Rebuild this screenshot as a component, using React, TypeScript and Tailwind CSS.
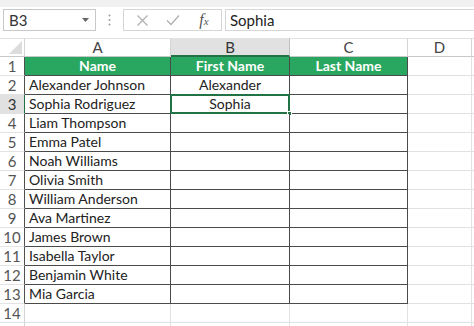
import React from "react";

const names = [
  "Alexander Johnson",
  "Sophia Rodriguez",
  "Liam Thompson",
  "Emma Patel",
  "Noah Williams",
  "Olivia Smith",
  "William Anderson",
  "Ava Martinez",
  "James Brown",
  "Isabella Taylor",
  "Benjamin White",
  "Mia Garcia",
];

const firstNames: Record<number, string> = { 2: "Alexander", 3: "Sophia" };

function RowHeader({ r }: { r: number }) {
  const inTable = r <= 13;
  let cls =
    "flex items-center justify-center border-b border-b-[#e3e3e3] border-r text-[15px] leading-none ";
  if (r === 3) cls += "bg-[#e1e1e1] text-[#333] border-r-[#217346] ";
  else cls += "bg-white text-[#555] ";
  if (r !== 3) cls += inTable ? "border-r-[#505050] " : "border-r-[#d4d4d4] ";
  return <div className={cls}>{r <= 14 ? r : ""}</div>;
}

function Row({ r }: { r: number }) {
  const inTable = r <= 13;
  const isHead = r === 1;
  const tableCell = inTable
    ? "border-r border-b border-r-[#4a4a4a] border-b-[#4a4a4a] "
    : "border-r border-b border-r-[#e1e1e1] border-b-[#e1e1e1] ";
  const fill = isHead ? "bg-[#29a760] text-white font-bold " : "bg-white text-[#222] ";
  const a = isHead ? "Name" : inTable ? names[r - 2] : "";
  const b = isHead ? "First Name" : firstNames[r] ?? "";
  const c = isHead ? "Last Name" : "";
  return (
    <>
      <RowHeader r={r} />
      <div
        className={
          tableCell +
          fill +
          "flex items-center text-[14px] leading-none whitespace-nowrap overflow-hidden " +
          (isHead ? "justify-center" : "pl-[4px]")
        }
      >
        {a}
      </div>
      <div
        className={
          tableCell +
          fill +
          "relative flex items-center justify-center text-[14px] leading-none whitespace-nowrap"
        }
      >
        {b}
        {r === 3 && (
          <>
            <div className="absolute left-[-1px] top-[-1px] right-[-1px] bottom-[-1px] border-2 border-[#217346]" />
            <div className="absolute right-[-3px] bottom-[-3px] w-[5px] h-[5px] bg-[#217346] border border-white" />
          </>
        )}
      </div>
      <div
        className={
          tableCell +
          fill +
          "flex items-center justify-center text-[14px] leading-none whitespace-nowrap"
        }
      >
        {c}
      </div>
      <div className="border-r border-b border-r-[#e1e1e1] border-b-[#e1e1e1] bg-white" />
      <div className="border-b border-b-[#e1e1e1] bg-white" />
    </>
  );
}

export default function App() {
  const rows = Array.from({ length: 15 }, (_, i) => i + 1);
  return (
    <div className="w-[474px] h-[326px] overflow-hidden bg-white font-['Lato',sans-serif] text-[#222]">
      {/* formula bar */}
      <div className="h-[38px] bg-white relative">
        <div className="h-[7px] bg-[#f1f1f1]" />
        <div className="flex items-stretch h-[22px] mt-[2px]">
          <div className="ml-[3px] w-[93px] border border-[#c8c8c8] bg-white flex items-center justify-between pl-[5px] pr-[6px]">
            <span className="text-[15px] text-[#333] leading-none">B3</span>
            <svg width="7" height="4" viewBox="0 0 7 4">
              <polygon points="0,0 7,0 3.5,4" fill="#666" />
            </svg>
          </div>
          <div className="w-[27px] flex items-center justify-center">
            <svg width="3" height="12" viewBox="0 0 3 12">
              <circle cx="1.5" cy="1.5" r="1" fill="#9a9a9a" />
              <circle cx="1.5" cy="6" r="1" fill="#9a9a9a" />
              <circle cx="1.5" cy="10.5" r="1" fill="#9a9a9a" />
            </svg>
          </div>
          <div className="w-[99px] border border-[#d6d6d6] bg-white flex items-center">
            <div className="w-[34px] flex justify-center ml-[1px]">
              <svg width="13" height="13" viewBox="0 0 13 13">
                <path d="M1.5 1.5 L11.5 11.5 M11.5 1.5 L1.5 11.5" stroke="#b0b0b0" strokeWidth="1.2" fill="none" />
              </svg>
            </div>
            <div className="w-[28px] flex justify-center">
              <svg width="14" height="12" viewBox="0 0 14 12">
                <path d="M1 6.5 L5 10.5 L13 1.5" stroke="#b0b0b0" strokeWidth="1.3" fill="none" />
              </svg>
            </div>
            <div className="w-[34px] flex justify-center">
              <span className="font-['Liberation_Serif',serif] italic text-[16px] text-[#555] leading-none">
                f<span className="text-[11px]">x</span>
              </span>
            </div>
          </div>
          <div className="ml-[3px] flex-1 border border-[#d6d6d6] border-r-0 bg-white flex items-center pl-[4px]">
            <span className="text-[15px] text-[#222] leading-none">Sophia</span>
          </div>
        </div>
      </div>

      {/* grid */}
      <div className="grid grid-cols-[25px_146px_119px_118px_64px_1fr] auto-rows-[19px]">
        {/* header row */}
        <div className="relative border-t border-t-[#e3e3e3] border-r border-r-[#d4d4d4] border-b border-b-[#c8c8c8] bg-white">
          <svg className="absolute right-[2px] bottom-[2px]" width="13" height="13" viewBox="0 0 13 13">
            <polygon points="13,0 13,13 0,13" fill="#dcdcdc" />
          </svg>
        </div>
        <div className="border-t border-t-[#e3e3e3] border-r border-r-[#d4d4d4] border-b border-b-[#c8c8c8] bg-white flex items-center justify-center text-[15px] text-[#444] leading-none">
          A
        </div>
        <div className="border-t border-t-[#e3e3e3] border-r border-r-[#c0c0c0] border-b-2 border-b-[#217346] bg-[#e1e1e1] flex items-center justify-center text-[15px] text-[#333] leading-none">
          B
        </div>
        <div className="border-t border-t-[#e3e3e3] border-r border-r-[#d4d4d4] border-b border-b-[#c8c8c8] bg-white flex items-center justify-center text-[15px] text-[#444] leading-none">
          C
        </div>
        <div className="border-t border-t-[#e3e3e3] border-r border-r-[#d4d4d4] border-b border-b-[#c8c8c8] bg-white flex items-center justify-center text-[15px] text-[#444] leading-none">
          D
        </div>
        <div className="border-t border-t-[#e3e3e3] border-b border-b-[#c8c8c8] bg-white" />
        {rows.map((r) => (
          <Row key={r} r={r} />
        ))}
      </div>
    </div>
  );
}
